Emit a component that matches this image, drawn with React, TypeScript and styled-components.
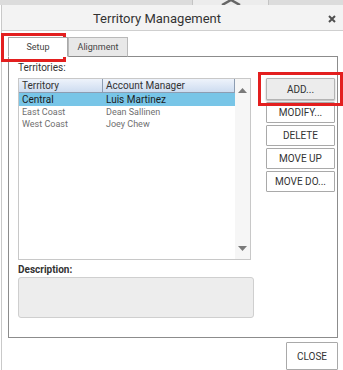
import React from "react";
import styled, { createGlobalStyle } from "styled-components";

const GlobalStyle = createGlobalStyle`
  html, body {
    margin: 0;
    padding: 0;
    background: #ffffff;
  }
  body {
    font-family: Roboto, "Liberation Sans", Arial, sans-serif;
    color: #333;
  }
`;

const Page = styled.div`
  position: relative;
  width: 343px;
  height: 370px;
  overflow: hidden;
`;

const Backdrop = styled.div`
  height: 5px;
  background: #dcdcdc;
  display: flex;
`;

const BackdropIcon = styled.div`
  margin-left: 192px;
  width: 75px;
  height: 5px;
  background: #ececec;
  border-left: 1px solid #c4c4c4;
  border-right: 1px solid #c4c4c4;
  display: flex;
  justify-content: center;
`;

const Dialog = styled.div`
  margin-left: 1px;
  border-left: 1px solid #c9c9c9;
  height: 365px;
  background: #ffffff;
`;

const TitleBar = styled.div`
  height: 25px;
  background: #f3f3f3;
  border-bottom: 1px solid #cfcfcf;
  display: flex;
  align-items: center;
`;

const Title = styled.div`
  flex: 1;
  text-align: center;
  font-size: 13px;
  color: #333;
  padding-top: 1px;
`;

const CloseIcon = styled.div`
  width: 31px;
  display: flex;
  justify-content: flex-start;
  padding-left: 16px;
  box-sizing: border-box;
  padding-top: 2px;
`;

const Body = styled.div`
  padding: 6px 0 0 6px;
`;

const TabRow = styled.div`
  display: flex;
  height: 20px;
  margin-bottom: -1px;
  position: relative;
  z-index: 1;
`;

const Tab = styled.div<{ $active?: boolean }>`
  width: 60px;
  box-sizing: border-box;
  border: 1px solid ${(p) => (p.$active ? "#a9a9a9" : "#b9b9b9")};
  border-bottom: ${(p) => (p.$active ? "1px solid #ffffff" : "1px solid #8c8c8c")};
  background: ${(p) => (p.$active ? "#ffffff" : "#e8e8e8")};
  font-size: 9px;
  color: #444;
  display: flex;
  align-items: center;
  justify-content: center;
`;

const Panel = styled.div`
  width: 330px;
  height: 282px;
  box-sizing: border-box;
  border: 1px solid #8c8c8c;
  padding: 5px 0 0 9px;
`;

const Label = styled.div<{ $bold?: boolean }>`
  font-size: 10px;
  line-height: 12px;
  color: #333;
  font-weight: ${(p) => (p.$bold ? 700 : 400)};
`;

const Row = styled.div`
  display: flex;
  gap: 12px;
  margin-top: 4px;
`;

const LeftCol = styled.div`
  width: 236px;
  display: flex;
  flex-direction: column;
`;

const Table = styled.div`
  width: 233px;
  height: 182px;
  box-sizing: border-box;
  border: 1px solid #c8c8c8;
  display: flex;
`;

const Grid = styled.div`
  flex: 1;
  display: flex;
  flex-direction: column;
`;

const HeaderRow = styled.div`
  display: flex;
  height: 13px;
  background: linear-gradient(#eef3fb, #cddcf0);
  border-bottom: 1px solid #8d9db2;
  border-right: 1px solid #8d9db2;
`;

const Cell = styled.div<{ $first?: boolean; $divider?: boolean }>`
  width: ${(p) => (p.$first ? "84px" : "auto")};
  flex: ${(p) => (p.$first ? "none" : 1)};
  border-right: ${(p) => (p.$divider ? "1px solid #8d9db2" : "none")};
  padding-left: 3px;
  box-sizing: border-box;
  white-space: nowrap;
  overflow: hidden;
  display: flex;
  align-items: center;
`;

const HeaderText = styled.span`
  font-size: 10px;
  color: #333;
`;

const DataRow = styled.div<{ $selected?: boolean }>`
  display: flex;
  height: ${(p) => (p.$selected ? "13px" : "12px")};
  background: ${(p) => (p.$selected ? "#78c5e7" : "transparent")};
  font-size: ${(p) => (p.$selected ? "10px" : "9px")};
  color: ${(p) => (p.$selected ? "#1c1c1c" : "#6f6f6f")};
`;

const Scrollbar = styled.div`
  width: 15px;
  background: #f6f6f6;
  display: flex;
  flex-direction: column;
  justify-content: space-between;
  align-items: center;
  padding: 9px 0 8px;
  box-sizing: border-box;
`;

const DescBox = styled.div`
  margin-top: 1px;
  width: 236px;
  height: 41px;
  box-sizing: border-box;
  background: #ededed;
  border: 1px solid #cfcfcf;
  border-radius: 3px;
`;

const ButtonCol = styled.div`
  width: 69px;
  display: flex;
  flex-direction: column;
  gap: 2px;
`;

const Button = styled.div<{ $primary?: boolean }>`
  height: ${(p) => (p.$primary ? "22px" : "21px")};
  box-sizing: border-box;
  border: 1px solid ${(p) => (p.$primary ? "#b4b4b4" : "#a9a9a9")};
  background: ${(p) => (p.$primary ? "#ececec" : "#ffffff")};
  box-shadow: ${(p) => (p.$primary ? "0 1px 2px rgba(0,0,0,0.3)" : "none")};
  border-radius: 1px;
  font-size: 10px;
  color: #333;
  display: flex;
  align-items: center;
  justify-content: center;
  white-space: nowrap;
`;

const Footer = styled.div`
  width: 330px;
  display: flex;
  justify-content: flex-end;
  margin-top: 4px;
`;

const CloseButton = styled(Button)`
  width: 52px;
  height: 28px;
`;

const Highlight = styled.div<{ $l: number; $t: number; $w: number; $h: number }>`
  position: absolute;
  left: ${(p) => p.$l}px;
  top: ${(p) => p.$t}px;
  width: ${(p) => p.$w}px;
  height: ${(p) => p.$h}px;
  box-sizing: border-box;
  border: 3px solid #e31f1f;
  pointer-events: none;
`;

const rows = [
  { territory: "Central", manager: "Luis Martinez", selected: true },
  { territory: "East Coast", manager: "Dean Sallinen" },
  { territory: "West Coast", manager: "Joey Chew" },
];

const actions = ["ADD...", "MODIFY...", "DELETE", "MOVE UP", "MOVE DO..."];

export default function App() {
  return (
    <Page>
      <GlobalStyle />
      <Backdrop>
        <BackdropIcon>
          <svg width="24" height="5" viewBox="0 0 24 5">
            <path d="M3 5 L12 0 L21 5" stroke="#666" strokeWidth="2.5" fill="none" />
          </svg>
        </BackdropIcon>
      </Backdrop>
      <Dialog>
        <TitleBar>
          <Title>Territory Management</Title>
          <CloseIcon>
            <svg width="8" height="8" viewBox="0 0 8 8">
              <path d="M1 1 L7 7 M7 1 L1 7" stroke="#505050" strokeWidth="2" />
            </svg>
          </CloseIcon>
        </TitleBar>
        <Body>
          <TabRow>
            <Tab $active>Setup</Tab>
            <Tab>Alignment</Tab>
          </TabRow>
          <Panel>
            <Label>Territories:</Label>
            <Row>
              <LeftCol>
                <Table>
                  <Grid>
                    <HeaderRow>
                      <Cell $first $divider>
                        <HeaderText>Territory</HeaderText>
                      </Cell>
                      <Cell>
                        <HeaderText>Account Manager</HeaderText>
                      </Cell>
                    </HeaderRow>
                    {rows.map((r) => (
                      <DataRow key={r.territory} $selected={r.selected}>
                        <Cell $first>{r.territory}</Cell>
                        <Cell>{r.manager}</Cell>
                      </DataRow>
                    ))}
                  </Grid>
                  <Scrollbar>
                    <svg width="9" height="5" viewBox="0 0 9 5">
                      <path d="M0 5 L4.5 0 L9 5 Z" fill="#7a7a7a" />
                    </svg>
                    <svg width="9" height="5" viewBox="0 0 9 5">
                      <path d="M0 0 L9 0 L4.5 5 Z" fill="#7a7a7a" />
                    </svg>
                  </Scrollbar>
                </Table>
                <Label $bold style={{ marginTop: 4 }}>
                  Description:
                </Label>
                <DescBox />
              </LeftCol>
              <ButtonCol>
                {actions.map((a, i) => (
                  <Button key={a} $primary={i === 0}>
                    {a}
                  </Button>
                ))}
              </ButtonCol>
            </Row>
          </Panel>
          <Footer>
            <CloseButton>CLOSE</CloseButton>
          </Footer>
        </Body>
      </Dialog>
      <Highlight $l={1} $t={33} $w={65} $h={29} />
      <Highlight $l={258} $t={72} $w={85} $h={34} />
    </Page>
  );
}
